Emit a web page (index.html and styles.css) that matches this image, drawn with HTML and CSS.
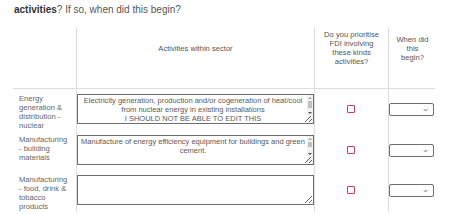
FILE: index.html
```html
<!DOCTYPE html>
<html lang="en">
<head>
    <meta charset="UTF-8">
    <title>FDI activities</title>
    <link rel="stylesheet" href="styles.css">
</head>
<body>
    <p class="pergunta"><b>activities</b>? If so, when did this begin?</p>

    <div class="grade">
        <div class="cab"></div>
        <div class="cab">Activities within sector</div>
        <div class="cab">Do you prioritise FDI involving these kinds activities?</div>
        <div class="cab cab-ano">When did this begin?</div>

        <div class="setor">Energy generation &amp; distribution - nuclear</div>
        <div class="atividade">
            <textarea class="com-barra" readonly>Electricity generation, production and/or cogeneration of heat/cool from nuclear energy in existing installations
I SHOULD NOT BE ABLE TO EDIT THIS</textarea>
            <!-- barra de rolagem desenhada, o navegador headless esconde a nativa -->
            <div class="barra"><span class="seta cima"></span><span class="trilho"><span class="polegar" style="height: 7px"></span></span><span class="seta baixo"></span></div>
        </div>
        <div class="marca"><div class="caixa"><input type="checkbox"></div></div>
        <div class="ano"><div class="caixa"><span class="seletor"><select><option></option></select><svg viewBox="0 0 6 4"><path d="M1 1l2 2 2-2" /></svg></span></div></div>

        <div class="setor">Manufacturing - building materials</div>
        <div class="atividade">
            <textarea class="com-barra" readonly>Manufacture of energy efficiency equipment for buildings and green cement.</textarea>
            <div class="barra"><span class="seta cima"></span><span class="trilho"><span class="polegar" style="height: 5px"></span></span><span class="seta baixo"></span></div>
        </div>
        <div class="marca"><div class="caixa"><input type="checkbox"></div></div>
        <div class="ano"><div class="caixa"><span class="seletor"><select><option></option></select><svg viewBox="0 0 6 4"><path d="M1 1l2 2 2-2" /></svg></span></div></div>

        <div class="setor">Manufacturing - food, drink &amp; tobacco products</div>
        <div class="atividade"><textarea></textarea></div>
        <div class="marca"><div class="caixa"><input type="checkbox"></div></div>
        <div class="ano"><div class="caixa"><span class="seletor"><select><option></option></select><svg viewBox="0 0 6 4"><path d="M1 1l2 2 2-2" /></svg></span></div></div>
    </div>
</body>
</html>
```

FILE: styles.css
```css
body {
    margin: 0;
    padding: 4px 13px 0;
    font-family: "Liberation Sans", Arial, sans-serif;
    background: #fff;
    overflow: hidden;
}

.pergunta {
    margin: 0 0 11px 1px;
    font-size: 10px;
    line-height: 12px;
    color: #555;
}
.pergunta b { color: #333; }

.grade {
    display: grid;
    grid-template-columns: 63px 238px 74px 47px;
    font-size: 7.6px;
    line-height: 9px;
}

.grade > div { box-sizing: border-box; }
.grade > div:not(:nth-child(4n+1)) { border-left: 1px solid #ddd; }

.cab {
    height: 62px;
    padding: 3px 6px 22px;
    border-bottom: 1px solid #ddd;
    display: flex;
    align-items: center;
    justify-content: center;
    text-align: center;
    color: #555;
}
.cab-ano { padding: 3px 5px 22px 6px; }

.setor {
    padding: 5px 7px 0 6px;
    color: #666;
}

.atividade {
    position: relative;
    padding-top: 5px;
}

textarea {
    display: block;
    box-sizing: border-box;
    width: 100%;
    height: 30px;
    margin: 0 0 5px;
    padding: 1px 2px;
    border: 1px solid #6e6e6e;
    border-radius: 0;
    font-family: "Liberation Sans", Arial, sans-serif;
    font-size: 7.5px;
    line-height: 9px;
    color: #5a5a5a;
    text-align: center;
    overflow: hidden;
}

.com-barra {
    padding-right: 7px;
    background: #fff linear-gradient(#f1f1f1, #f1f1f1) no-repeat right bottom / 6px 7px;
}

/* --- barra de rolagem falsa --- */
.barra {
    position: absolute;
    top: 6px;
    right: 1px;
    width: 6px;
    height: 21px;
    display: flex;
    flex-direction: column;
    background: #f1f1f1;
}

.seta {
    height: 6px;
    display: flex;
    align-items: center;
    justify-content: center;
}
.seta::before {
    content: "";
    border-left: 2px solid transparent;
    border-right: 2px solid transparent;
}
.cima::before { border-bottom: 2px solid #a3a3a3; }
.baixo::before { border-top: 2px solid #505050; }

.trilho {
    flex: 1;
    padding: 0 1px;
}
.polegar {
    display: block;
    background: #c1c1c1;
}

.marca, .ano { padding-top: 5px; }

.caixa {
    height: 30px;
    display: flex;
    align-items: center;
}
.marca .caixa { justify-content: center; }

input[type="checkbox"] {
    appearance: none;
    width: 8px;
    height: 8px;
    margin: 0 0 0 -2px;
    border: 1px solid #d13a58;
    border-radius: 1px;
    background: #fff;
}

.seletor {
    position: relative;
    display: block;
}

select {
    appearance: none;
    display: block;
    width: 45px;
    height: 13px;
    margin: 0;
    border: 1px solid #6e6e6e;
    border-radius: 2px;
    background: #fff;
    font-size: 7px;
}

.seletor svg {
    position: absolute;
    right: 6px;
    top: 5px;
    width: 5px;
    height: 4px;
    fill: none;
    stroke: #444;
    stroke-width: 1;
}
```
